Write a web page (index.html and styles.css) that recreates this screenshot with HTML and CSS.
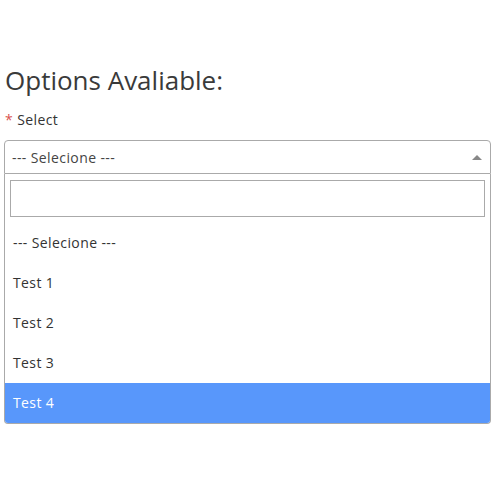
FILE: index.html
```html
<!DOCTYPE html>
<html>
<head>
<meta charset="utf-8">
<link rel="stylesheet" href="styles.css">
</head>
<body>
<div class="page">
  <h3 class="title">Options Avaliable:</h3>
  <label class="label"><span class="req">*</span> Select</label>
  <div class="select">
    <div class="selection">
      <span class="rendered">--- Selecione ---</span>
      <span class="arrow"></span>
    </div>
    <div class="dropdown">
      <div class="search-wrap"><input class="search" type="text"></div>
      <ul class="options">
        <li class="option">--- Selecione ---</li>
        <li class="option">Test 1</li>
        <li class="option">Test 2</li>
        <li class="option">Test 3</li>
        <li class="option active">Test 4</li>
      </ul>
    </div>
  </div>
</div>
</body>
</html>
```
FILE: styles.css
```css
html, body {
  margin: 0;
  padding: 0;
  background: #fff;
}
body {
  font-family: "Open Sans", "Liberation Sans", sans-serif;
  color: #333;
}
.page {
  padding: 61px 9px 0 4px;
}
.title {
  margin: 0 0 0 1px;
  font-size: 26px;
  font-weight: 400;
  line-height: 38px;
  color: #3a3a3a;
}
.label {
  display: block;
  margin: 11px 0 0 1px;
  font-size: 14px;
  letter-spacing: 0.4px;
  line-height: 20px;
  color: #333;
}
.req {
  color: #d9534f;
}
.select {
  margin-top: 10px;
  width: 487px;
}
.selection {
  box-sizing: border-box;
  height: 34px;
  border: 1px solid #aaa;
  border-radius: 4px 4px 0 0;
  display: flex;
  align-items: center;
  justify-content: space-between;
  padding: 0 8px 0 7px;
  background: #fff;
}
.rendered {
  font-size: 14px;
  letter-spacing: 0.4px;
  color: #444;
}
.arrow {
  width: 0;
  height: 0;
  border-left: 5px solid transparent;
  border-right: 5px solid transparent;
  border-bottom: 5px solid #888;
}
.dropdown {
  border: 1px solid #aaa;
  border-top: none;
  border-radius: 0 0 4px 4px;
  overflow: hidden;
  background: #fff;
}
.search-wrap {
  padding: 6px 5px 6px 5px;
}
.search {
  display: block;
  box-sizing: border-box;
  width: 100%;
  height: 37px;
  border: 1px solid #aaa;
  margin: 0;
  padding: 4px;
  font: inherit;
  outline: none;
}
.options {
  list-style: none;
  margin: 0;
  padding: 0;
}
.option {
  height: 40px;
  line-height: 40px;
  padding-left: 8px;
  font-size: 14px;
  letter-spacing: 0.4px;
  color: #333;
}
.option.active {
  background: #5897fb;
  color: #fff;
}
```
